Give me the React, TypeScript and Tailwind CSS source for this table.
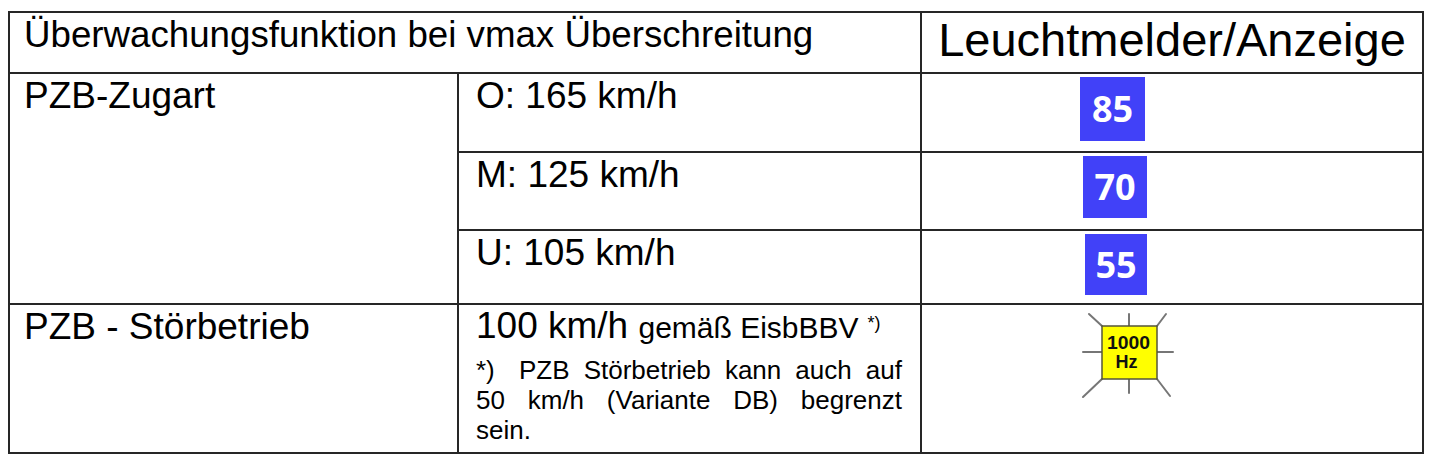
import React from "react";

const body = "font-['Liberation_Sans',Arial,sans-serif] text-black";

function Badge({ n, w, h, pl }: { n: string; w: string; h: string; pl: string }) {
  return (
    <div className={`bg-white pt-[3px] ${pl}`}>
      <div
        className={`${w} ${h} bg-[#4141f8] flex items-center justify-center text-white font-['Open_Sans',sans-serif] font-bold text-[36px] leading-none`}
      >
        {n}
      </div>
    </div>
  );
}

function HzIcon() {
  const ray = "#767676";
  return (
    <svg width="100" height="92" viewBox="0 0 100 92">
      <g stroke={ray} strokeWidth="2" strokeLinecap="round">
        <line x1="49" y1="3" x2="49" y2="15" />
        <line x1="49" y1="68" x2="49" y2="82" />
        <line x1="3" y1="41" x2="22" y2="41" />
        <line x1="77" y1="41" x2="93" y2="41" />
        <line x1="9" y1="3" x2="22" y2="15" />
        <line x1="77" y1="15" x2="86" y2="3" />
        <line x1="22" y1="68" x2="3" y2="86" />
        <line x1="77" y1="68" x2="90" y2="85" />
      </g>
      <rect x="22" y="15" width="55" height="53" fill="#ffff00" stroke="#55553a" strokeWidth="1.5" />
      <text
        x="27"
        y="37.5"
        textLength="43"
        lengthAdjust="spacingAndGlyphs"
        fontFamily="Liberation Sans, Arial, sans-serif"
        fontWeight="bold"
        fontSize="18"
        fill="#111"
      >
        1000
      </text>
      <text
        x="35.5"
        y="57"
        textLength="22"
        lengthAdjust="spacingAndGlyphs"
        fontFamily="Liberation Sans, Arial, sans-serif"
        fontWeight="bold"
        fontSize="18"
        fill="#111"
      >
        Hz
      </text>
    </svg>
  );
}

export default function App() {
  return (
    <div className={`bg-white w-[1434px] h-[467px] pt-[11px] pl-[8px] ${body}`}>
      <div className="grid w-fit grid-cols-[447px_461px_500px] grid-rows-[59px_77px_76px_72px_147px] gap-[2px] p-[2px] bg-[#262626]">
        {/* header */}
        <div className="col-span-2 bg-white pl-[14px] pt-[1px] text-[36.7px] leading-[42px] whitespace-nowrap">
          Überwachungsfunktion bei vmax Überschreitung
        </div>
        <div className="bg-white text-center text-[47px] leading-[53px] whitespace-nowrap">
          Leuchtmelder/Anzeige
        </div>

        {/* PZB-Zugart */}
        <div className="row-span-3 bg-white pl-[14px] pt-[1px] text-[37px] leading-[42px]">PZB-Zugart</div>

        <div className="bg-white pl-[17px] pt-[1px] text-[37px] leading-[42px]">O: 165 km/h</div>
        <Badge n="85" w="w-[65px]" h="h-[64px]" pl="pl-[158px]" />

        <div className="bg-white pl-[17px] pt-[1px] text-[37px] leading-[42px]">M: 125 km/h</div>
        <Badge n="70" w="w-[64px]" h="h-[62px]" pl="pl-[161px]" />

        <div className="bg-white pl-[17px] pt-[1px] text-[37px] leading-[42px]">U: 105 km/h</div>
        <Badge n="55" w="w-[62px]" h="h-[61px]" pl="pl-[163px]" />

        {/* Störbetrieb */}
        <div className="bg-white pl-[14px] pt-[1px] text-[37px] leading-[42px]">PZB - Störbetrieb</div>
        <div className="bg-white pl-[17px] pr-[18px]">
          <div className="text-[37px] leading-[42px] whitespace-nowrap">
            100 km/h <span className="text-[30px] leading-none">gemäß EisbBBV</span>
            <span className="text-[18px] leading-none relative -top-[9px] ml-[9px]">*)</span>
          </div>
          <div className="mt-[8px] text-[26px] leading-[30px] w-[426px]">
            <div className="flex">
              <span className="w-[43px]">*)</span>
              <div className="flex flex-1 justify-between">
                <span>PZB</span>
                <span>Störbetrieb</span>
                <span>kann</span>
                <span>auch</span>
                <span>auf</span>
              </div>
            </div>
            <div className="flex justify-between">
              <span>50</span>
              <span>km/h</span>
              <span>(Variante</span>
              <span>DB)</span>
              <span>begrenzt</span>
            </div>
            <div>sein.</div>
          </div>
        </div>
        <div className="bg-white pl-[158px] pt-[6px]">
          <HzIcon />
        </div>
      </div>
    </div>
  );
}
